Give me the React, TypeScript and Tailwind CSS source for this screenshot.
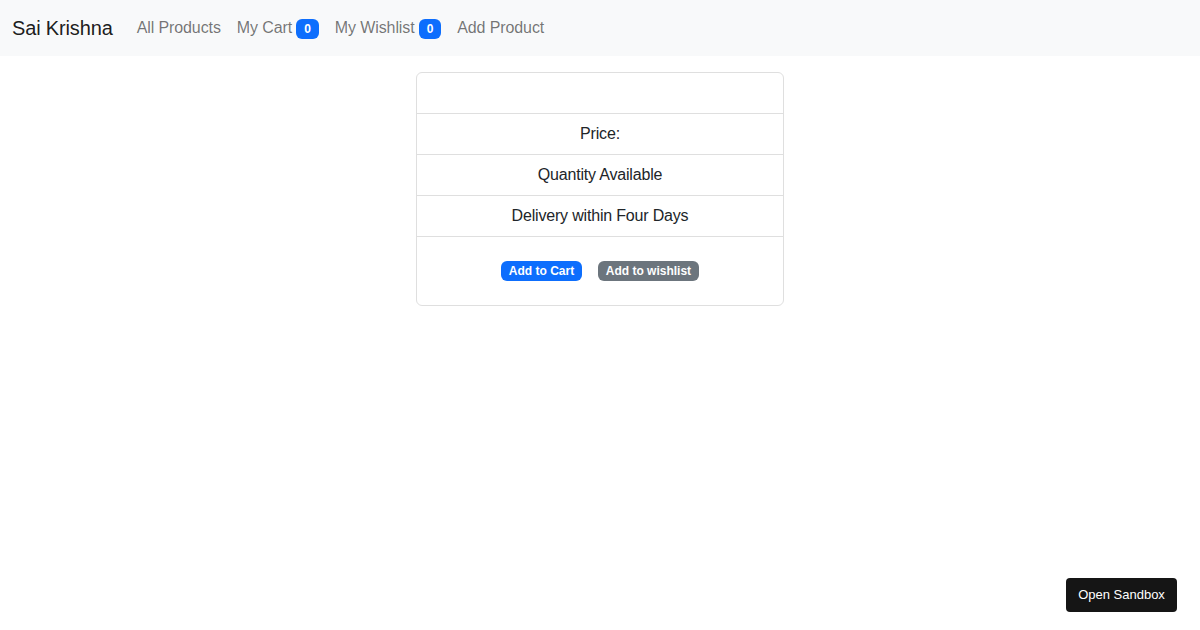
import React from "react";

function Badge({ children, tone = "primary" }: { children: React.ReactNode; tone?: "primary" | "secondary" }) {
  const bg = tone === "primary" ? "bg-[#0d6efd]" : "bg-[#6c757d]";
  return (
    <span className={`${bg} inline-block rounded-[6px] px-[7.8px] py-[4.2px] text-[12px] font-bold leading-none tracking-normal text-white`}>
      {children}
    </span>
  );
}

const navLinks = [
  { label: "All Products" },
  { label: "My Cart", count: 0 },
  { label: "My Wishlist", count: 0 },
  { label: "Add Product" },
];

export default function App() {
  return (
    <div className="min-h-screen bg-white font-['Liberation_Sans',Arial,sans-serif] text-[#212529]">
      <nav className="flex h-[56px] items-center bg-[#f8f9fa] px-3">
        <a className="mr-4 py-[5px] text-[20px] leading-[30px] tracking-[-0.15px] text-[rgba(0,0,0,0.9)]">Sai Krishna</a>
        <div className="flex items-center">
          {navLinks.map((link) => (
            <a key={link.label} className="px-2 py-2 text-[16px] leading-6 tracking-[-0.1px] text-[rgba(0,0,0,0.55)]">
              {link.label}
              {link.count !== undefined ? (
                <>
                  {" "}
                  <Badge>{link.count}</Badge>
                </>
              ) : null}
            </a>
          ))}
        </div>
      </nav>

      <div className="flex justify-center pt-4">
        <div className="w-[368px] rounded-[6px] border border-[#dfdfdf] text-center text-[16px] leading-6 tracking-[-0.18px]">
          <div className="h-[41px] border-b border-[#dfdfdf]" />
          <div className="border-b border-[#dfdfdf] px-4 py-2">Price:</div>
          <div className="border-b border-[#dfdfdf] px-4 py-2">Quantity Available</div>
          <div className="border-b border-[#dfdfdf] px-4 py-2">Delivery within Four Days</div>
          <div className="flex h-[68px] items-center justify-center gap-4">
            <Badge>Add to Cart</Badge>
            <Badge tone="secondary">Add to wishlist</Badge>
          </div>
        </div>
      </div>

      <button className="fixed bottom-[18px] right-[23px] h-[34px] w-[111px] rounded-[4px] bg-[#151515] text-[13px] text-white">
        Open Sandbox
      </button>
    </div>
  );
}
